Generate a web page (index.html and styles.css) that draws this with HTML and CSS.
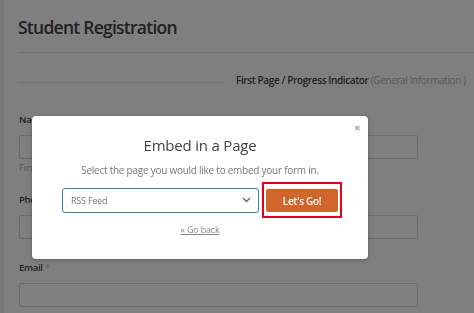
FILE: index.html
```html
<!DOCTYPE html>
<html>
<head>
<meta charset="utf-8">
<link rel="stylesheet" href="styles.css">
</head>
<body>
<div class="page">
  <h1 class="title">Student Registration</h1>
  <div class="divider-top"></div>
  <div class="section-head">
    <div class="section-line"></div>
    <div class="section-text"><b>First Page / Progress Indicator</b> <span class="muted">(General Information )</span></div>
  </div>
  <div class="field field-name">
    <div class="label">Name <span class="req">*</span></div>
    <div class="input"></div>
    <div class="sublabel">First</div>
  </div>
  <div class="field field-phone">
    <div class="label">Phone <span class="req">*</span></div>
    <div class="input"></div>
  </div>
  <div class="field field-email">
    <div class="label">Email <span class="req">*</span></div>
    <div class="input"></div>
  </div>
</div>
<div class="backdrop"></div>
<div class="modal">
  <span class="close">&#x2716;</span>
  <h2 class="modal-title">Embed in a Page</h2>
  <p class="modal-sub">Select the page you would like to embed your form in.</p>
  <div class="modal-row">
    <div class="select">
      <span>RSS Feed</span>
      <svg class="chev" width="9" height="6" viewBox="0 0 9 6"><path d="M1 1l3.5 3.5L8 1" fill="none" stroke="#666" stroke-width="1.3"/></svg>
    </div>
    <div class="highlight"><div class="btn">Let's Go!</div></div>
  </div>
  <a class="back">« Go back</a>
</div>
</body>
</html>
```
FILE: styles.css
```css
html, body { margin: 0; padding: 0; }
body {
  background: #f1f1f1;
  font-family: "Open Sans", "Noto Sans", sans-serif;
  width: 474px;
  height: 313px;
  overflow: hidden;
}
.page {
  margin-left: 4px;
  background: #fff;
  height: 313px;
  padding: 15px 0 0 14px;
  box-sizing: border-box;
  color: #444;
}
.title {
  margin: 0;
  font-size: 17.5px;
  font-weight: 600;
  line-height: 24px;
  color: #444;
  letter-spacing: -0.75px;
}
.divider-top {
  margin-top: 13px;
  border-top: 1px solid #e4e4e4;
}
.section-head {
  display: flex;
  align-items: center;
  gap: 11px;
  margin-top: 20px;
  height: 14px;
}
.section-line {
  flex: 0 0 207px;
  margin-top: 5px;
  border-top: 1px solid #e4e4e4;
}
.section-text {
  font-size: 10px;
  line-height: 14px;
  color: #444;
  white-space: nowrap;
  letter-spacing: -0.38px;
}
.section-text b { font-weight: 600; }
.muted { color: #b0b0b0; }
.label {
  font-size: 9.5px;
  font-weight: 600;
  line-height: 13px;
  margin-left: 1px;
  letter-spacing: -0.3px;
}
.field-name { margin-top: 26px; }
.field-phone { margin-top: 19px; }
.field-email { margin-top: 22px; }
.req { color: #c0c0c0; font-weight: 400; }
.input {
  margin-top: 9px;
  margin-left: 1px;
  width: 399px;
  height: 24px;
  box-sizing: border-box;
  border: 1px solid #d8d8d8;
  border-radius: 2px;
}
.sublabel {
  font-size: 9px;
  line-height: 12px;
  color: #a8a8a8;
  margin-top: 3px;
  margin-left: 1px;
}
.backdrop {
  position: fixed;
  inset: 0;
  background: rgba(0,0,0,0.5);
}
.modal {
  position: absolute;
  left: 32px;
  top: 116px;
  width: 336px;
  height: 143px;
  background: #fff;
  border-radius: 4px;
  box-shadow: 0 1px 4px rgba(0,0,0,0.25);
  box-sizing: border-box;
  padding-top: 19px;
  display: flex;
  flex-direction: column;
  align-items: center;
}
.close {
  position: absolute;
  right: 7px;
  top: 6px;
  font-size: 8px;
  color: #b0b0b0;
}
.modal-title {
  margin: 0;
  font-size: 15px;
  font-weight: 400;
  line-height: 20px;
  color: #444;
  letter-spacing: -0.2px;
}
.modal-sub {
  margin: 8px 0 0;
  font-size: 10px;
  line-height: 14px;
  color: #777;
  letter-spacing: -0.25px;
}
.modal-row {
  display: flex;
  align-items: center;
  gap: 3px;
  margin-top: 5px;
  margin-left: 4px;
}
.select {
  width: 197px;
  height: 25px;
  box-sizing: border-box;
  border: 1.5px solid #3f7fb0;
  border-radius: 3px;
  display: flex;
  align-items: center;
  justify-content: space-between;
  padding: 0 7px 0 8px;
  font-size: 9px;
  color: #777;
  letter-spacing: -0.2px;
}
.highlight {
  border: 2px solid #e3001b;
  padding: 5px 2px 4px 2px;
}
.btn {
  width: 72px;
  height: 23px;
  background: #d0662a;
  border-radius: 2px;
  color: #fff;
  font-size: 10px;
  font-weight: 600;
  letter-spacing: -0.3px;
  display: flex;
  align-items: center;
  justify-content: center;
}
.back {
  margin-top: 6px;
  font-size: 9px;
  line-height: 12px;
  color: #888;
  letter-spacing: -0.2px;
  text-decoration: underline;
}
```
